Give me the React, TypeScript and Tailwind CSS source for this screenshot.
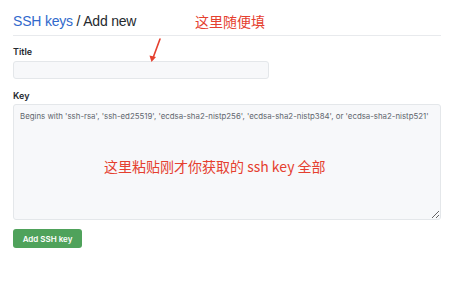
import React from "react";

const sans = "font-['Inter','Liberation_Sans','Noto_Sans_CJK_SC',sans-serif]";
const cjk = "font-['Noto_Sans_CJK_SC','Noto_Sans',sans-serif]";

function Arrow() {
  return (
    <svg
      className="absolute left-[146px] top-[37px]"
      width="20"
      height="28"
      viewBox="0 0 20 28"
      aria-hidden="true"
    >
      <line x1="14" y1="2" x2="7" y2="21" stroke="#e5402f" strokeWidth="1.6" strokeLinecap="round" />
      <path d="M3.5 18.5 L5.5 25 L10 20 Z" fill="#e5402f" />
    </svg>
  );
}

export default function App() {
  return (
    <div className={`relative h-[301px] w-[474px] overflow-hidden bg-white pl-[13px] ${sans}`}>
      <div className="flex w-[428px] flex-col items-start">
        <div className="w-full border-b border-[#e8eaed] pb-[4px] pt-[11px]">
          <h1 className="font-['Liberation_Sans',sans-serif] text-[14px] font-normal leading-[20px] tracking-[-0.2px] text-[#24292e]">
            <span className="text-[#3169cc]">SSH keys</span> / Add new
          </h1>
        </div>

        <label className="mt-[10px] block text-[9px] font-semibold leading-[12px] text-[#24292e]">
          Title
        </label>
        <input
          type="text"
          className="mt-[3px] block h-[18px] w-[256px] rounded-[3px] border border-[#e4e7ea] bg-[#f7f8fa] outline-none"
        />

        <label className="mt-[11px] block text-[9px] font-semibold leading-[12px] text-[#24292e]">
          Key
        </label>
        <textarea
          className="mt-[2px] block h-[116px] w-full rounded-[3px] border border-[#e4e7ea] bg-[#f7f8fa] pl-[6px] pr-[2px] pt-[6px] text-[7.85px] leading-[11px] text-[#24292e] outline-none placeholder:text-[#5f666e]"
          placeholder="Begins with 'ssh-rsa', 'ssh-ed25519', 'ecdsa-sha2-nistp256', 'ecdsa-sha2-nistp384', or 'ecdsa-sha2-nistp521'"
        />

        <button
          type="button"
          className="mt-[9px] flex h-[19px] w-[69px] items-center justify-center rounded-[3px] bg-[#4fa25b] text-[8px] font-semibold text-white"
        >
          Add SSH key
        </button>
      </div>

      <p className={`absolute left-[195px] top-[11px] text-[14px] leading-[20px] text-[#e5402f] ${cjk}`}>
        这里随便填
      </p>
      <Arrow />
      <p className={`absolute left-[104px] top-[156px] text-[14px] leading-[20px] text-[#e5402f] ${cjk}`}>
        这里粘贴刚才你获取的 ssh key 全部
      </p>
    </div>
  );
}
